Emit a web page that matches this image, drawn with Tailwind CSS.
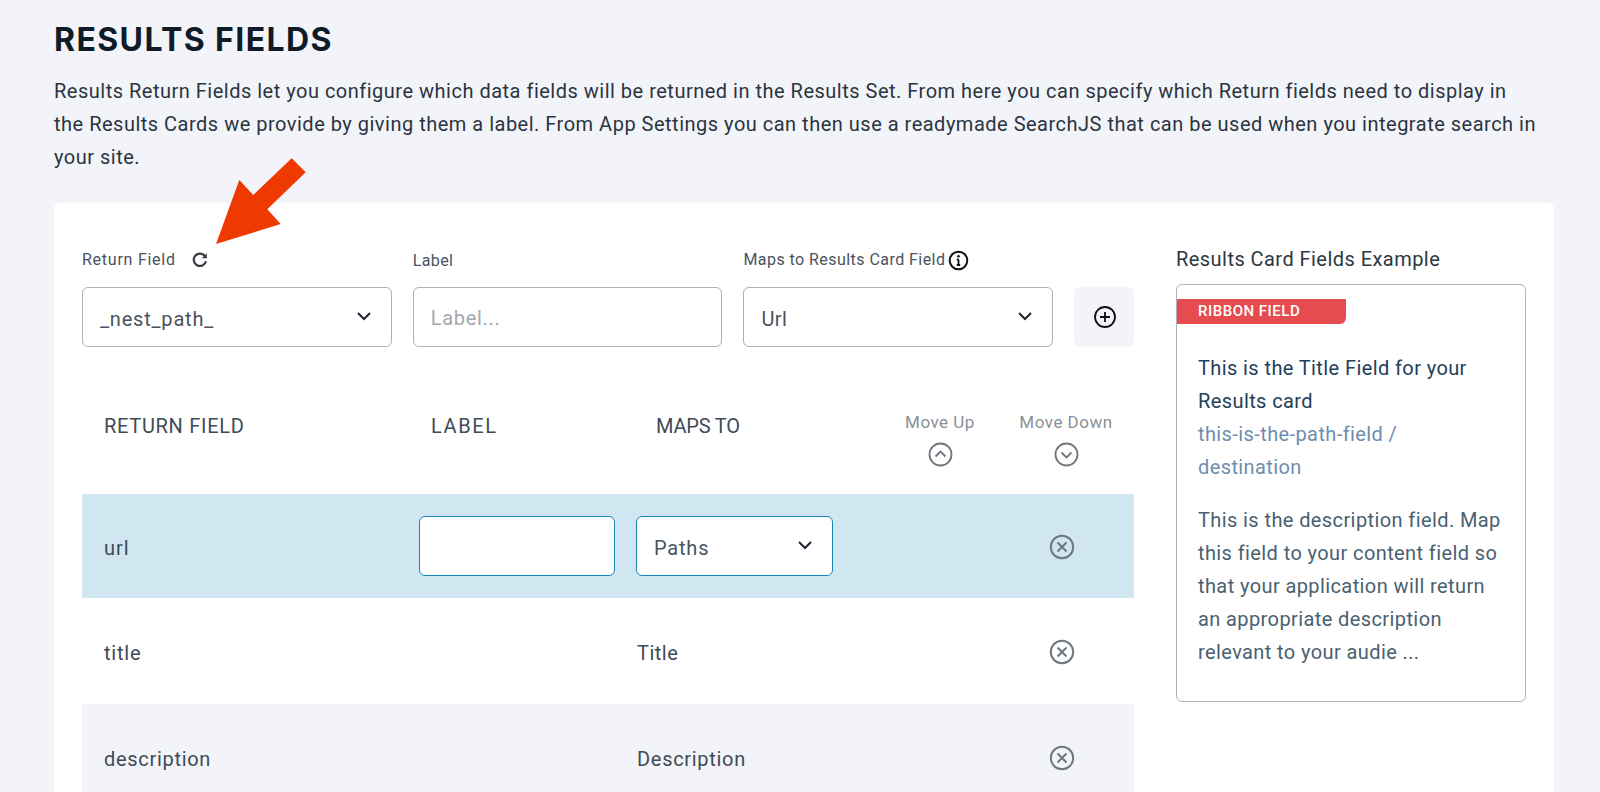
<!DOCTYPE html>
<html lang="en">

<head>
    <meta charset="utf-8" />
    <title>Results Fields</title>
    <script src="https://cdn.jsdelivr.net/npm/@tailwindcss/browser@4"></script>
</head>

<body class="bg-[#f2f4f9] font-['Roboto',sans-serif] tracking-[0.5px] text-[#3f4a56]">
    <div class="relative h-[792px] overflow-hidden pl-[54px] pr-[46px]">
        <!-- Page title -->
        <h1 class="pt-[22px] font-['Inter',sans-serif] text-[32px] leading-[36px] font-bold tracking-[1.4px] text-[#101b28]">RESULTS FIELDS</h1>
        <p class="mt-[17px] h-[128px] text-[20px] leading-[33px] text-[#2b343f]">
            Results Return Fields let you configure which data fields will be returned in the Results Set. From here you can specify which Return fields need to display in<br />
            the Results Cards we provide by giving them a label. From App Settings you can then use a readymade SearchJS that can be used when you integrate search in<br />
            your site.
        </p>

        <!-- Card -->
        <div class="flex rounded-t-md bg-white pl-[28px] pr-[28px]">
            <!-- Left column -->
            <div class="w-[1052px] pt-[44px]">
                <!-- Add field form -->
                <div class="flex gap-[21px]">
                    <div class="w-[310px]">
                        <div class="flex h-[26px] items-center text-[16px] tracking-[0.75px] text-[#4a535e]">
                            Return Field
                            <svg class="ml-[15px] h-[18px] w-[18px]" viewBox="0 0 18 18" fill="none" stroke="#363d46" stroke-width="2.2">
                                <path d="M14.2 5.4A6.2 6.2 0 1 0 15 10.2" />
                                <path d="M15.8 2.2v5h-5z" fill="#363d46" stroke="none" />
                            </svg>
                        </div>
                        <div class="relative mt-[14px]">
                            <select class="h-[60px] w-full appearance-none rounded-md border-[1.5px] border-[#adb1b8] bg-white pl-[17px] pt-[3px] text-[20px] tracking-[0.8px] text-[#4a535e]">
                                <option>_nest_path_</option>
                            </select>
                            <svg class="pointer-events-none absolute right-[20px] top-[24px] h-[10px] w-[16px]" viewBox="0 0 16 10" fill="none" stroke="#1d2530" stroke-width="2"><path d="M2 2l6 6 6-6" /></svg>
                        </div>
                    </div>
                    <div class="w-[310px]">
                        <div class="flex h-[26px] items-center pt-[2px] text-[16px] tracking-[0.4px] text-[#4a535e]">Label</div>
                        <input type="text" placeholder="Label..." class="mt-[14px] h-[60px] w-full rounded-md border-[1.5px] border-[#adb1b8] bg-white pl-[17px] pt-[2px] text-[20px] tracking-[0.7px] placeholder:text-[#a3a8af]" />
                    </div>
                    <div class="w-[310px]">
                        <div class="flex h-[26px] items-center gap-[3px] text-[16px] tracking-[0.45px] text-[#4a535e]">
                            Maps to Results Card Field
                            <svg class="h-[21px] w-[21px]" viewBox="0 0 21 21" fill="none" stroke="#111" stroke-width="2">
                                <circle cx="10.5" cy="10.5" r="8.8" />
                                <path d="M10.5 9.5v5.5M8.8 15h3.4M8.8 9.5h1.7" stroke-width="1.8" />
                                <circle cx="10.5" cy="6.2" r="1.3" fill="#111" stroke="none" />
                            </svg>
                        </div>
                        <div class="relative mt-[14px]">
                            <select class="h-[60px] w-full appearance-none rounded-md border-[1.5px] border-[#adb1b8] bg-white pl-[17px] pt-[3px] text-[20px] text-[#4a535e]">
                                <option>Url</option>
                            </select>
                            <svg class="pointer-events-none absolute right-[20px] top-[24px] h-[10px] w-[16px]" viewBox="0 0 16 10" fill="none" stroke="#1d2530" stroke-width="2"><path d="M2 2l6 6 6-6" /></svg>
                        </div>
                    </div>
                    <button class="mt-[40px] flex h-[60px] w-[60px] items-center justify-center rounded-md bg-[#f2f4f9] pl-[2px]">
                        <svg class="h-[24px] w-[24px]" viewBox="0 0 24 24" fill="none" stroke="#111" stroke-width="1.8">
                            <circle cx="12" cy="12" r="10" />
                            <path d="M12 7v10M7 12h10" />
                        </svg>
                    </button>
                </div>

                <!-- Table header -->
                <div class="grid h-[147px] grid-cols-[337px_225px_217px_1fr] pt-[67px] text-[20px] leading-[24px] text-[#3f4a56]">
                    <div class="pl-[22px] tracking-[0.7px]">RETURN FIELD</div>
                    <div class="pl-[12px] tracking-[1.6px]">LABEL</div>
                    <div class="pl-[12px] tracking-[-0.2px]">MAPS TO</div>
                    <div class="-mt-[2px] flex pl-[29px] text-center text-[17px] leading-[20px] tracking-[0.5px] text-[#8a9097]">
                        <div class="w-[100px]">
                            Move Up
                            <svg class="mx-auto mt-[10px] h-[25px] w-[25px]" viewBox="0 0 25 25" fill="none" stroke="#6f767e" stroke-width="1.8">
                                <circle cx="12.5" cy="12.5" r="11" />
                                <path d="M7.5 14.5l5-5 5 5" />
                            </svg>
                        </div>
                        <div class="ml-[26px] w-[100px]">
                            Move Down
                            <svg class="mx-auto mt-[10px] h-[25px] w-[25px]" viewBox="0 0 25 25" fill="none" stroke="#6f767e" stroke-width="1.8">
                                <circle cx="12.5" cy="12.5" r="11" />
                                <path d="M7.5 10.5l5 5 5-5" />
                            </svg>
                        </div>
                    </div>
                </div>

                <!-- Table rows -->
                <div class="grid h-[104px] grid-cols-[337px_217px_197px_1fr] items-center bg-[#d0e6f1] text-[20px]">
                    <div class="pl-[22px] pt-[4px] tracking-[1px]">url</div>
                    <input type="text" class="h-[60px] w-[196px] rounded-md border-[1.5px] border-[#1a86b8] bg-white" />
                    <div class="relative">
                        <select class="h-[60px] w-full appearance-none rounded-md border-[1.5px] border-[#1a86b8] bg-white pl-[17px] pt-[3px] text-[20px] tracking-[0.8px] text-[#4a535e]">
                            <option>Paths</option>
                        </select>
                        <svg class="pointer-events-none absolute right-[20px] top-[24px] h-[10px] w-[16px]" viewBox="0 0 16 10" fill="none" stroke="#1d2530" stroke-width="2"><path d="M2 2l6 6 6-6" /></svg>
                    </div>
                    <div class="flex justify-end pr-[59px] pt-[2px]">
                        <svg class="h-[26px] w-[26px]" viewBox="0 0 26 26" fill="none" stroke="#6f767e" stroke-width="2">
                            <circle cx="13" cy="13" r="11.2" />
                            <path d="M8.5 8.5l9 9M17.5 8.5l-9 9" />
                        </svg>
                    </div>
                </div>
                <div class="grid h-[106px] grid-cols-[337px_217px_197px_1fr] items-center bg-white text-[20px]">
                    <div class="pl-[22px] pt-[4px] tracking-[0.8px]">title</div>
                    <div></div>
                    <div class="pl-[1px] pt-[4px]">Title</div>
                    <div class="flex justify-end pr-[59px] pt-[2px]">
                        <svg class="h-[26px] w-[26px]" viewBox="0 0 26 26" fill="none" stroke="#6f767e" stroke-width="2">
                            <circle cx="13" cy="13" r="11.2" />
                            <path d="M8.5 8.5l9 9M17.5 8.5l-9 9" />
                        </svg>
                    </div>
                </div>
                <div class="grid h-[105px] grid-cols-[337px_217px_197px_1fr] items-center bg-[#f2f4f9] text-[20px]">
                    <div class="pl-[22px] pt-[4px] tracking-[0.7px]">description</div>
                    <div></div>
                    <div class="pl-[1px] pt-[4px] tracking-[0.7px]">Description</div>
                    <div class="flex justify-end pr-[59px] pt-[2px]">
                        <svg class="h-[26px] w-[26px]" viewBox="0 0 26 26" fill="none" stroke="#6f767e" stroke-width="2">
                            <circle cx="13" cy="13" r="11.2" />
                            <path d="M8.5 8.5l9 9M17.5 8.5l-9 9" />
                        </svg>
                    </div>
                </div>
                <div class="h-[60px]"></div>
            </div>

            <!-- Results card example -->
            <div class="ml-[42px] w-[350px] pt-[44px]">
                <div class="h-[26px] text-[20px] leading-[24px] tracking-[0.45px] text-[#2b3742]">Results Card Fields Example</div>
                <div class="mt-[11px] h-[418px] rounded-md border-[1.5px] border-[#adb1b8] pt-[14px]">
                    <div class="h-[25px] w-[169px] rounded-br-md bg-[#e54b4f] pl-[21px] text-[15px] leading-[25px] font-medium text-white">RIBBON FIELD</div>
                    <div class="px-[21px] pt-[28px] text-[20px] leading-[33px] tracking-[0.4px]">
                        <div class="text-[#23405a]">This is the Title Field for your Results card</div>
                        <div class="text-[#6f8cae]">this-is-the-path-field / destination</div>
                        <div class="mt-[20px] text-[#4a5f70]">This is the description field. Map this field to your content field so that your application will return an appropriate description relevant to your audie ...</div>
                    </div>
                </div>
            </div>
        </div>

        <!-- Annotation arrow -->
        <svg class="absolute left-[210px] top-[150px] h-[100px] w-[100px]" viewBox="210 150 100 100">
            <polygon points="291.7,158.3 305.7,172.3 267.3,209.3 280.7,224 216,244 239.3,180 253.3,195" fill="#ee3a00" />
        </svg>
    </div>
</body>

</html>
